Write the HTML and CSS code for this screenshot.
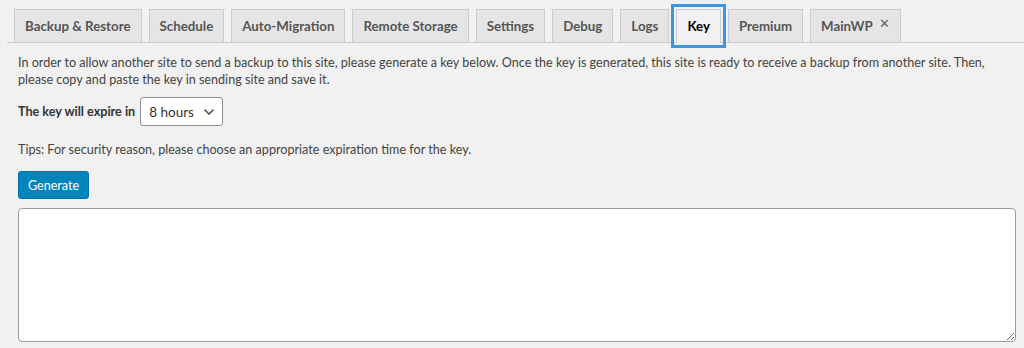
FILE: index.html
```html
<!DOCTYPE html>
<html lang="en">
<head>
    <meta charset="UTF-8">
    <title>Key</title>
    <link rel="stylesheet" href="styles.css">
</head>
<body>

<!-- Tab menu -->
<div class="nav-tab-wrapper">
    <a href="#" class="nav-tab">Backup &amp; Restore</a>
    <a href="#" class="nav-tab">Schedule</a>
    <a href="#" class="nav-tab">Auto-Migration</a>
    <a href="#" class="nav-tab">Remote Storage</a>
    <a href="#" class="nav-tab">Settings</a>
    <a href="#" class="nav-tab">Debug</a>
    <a href="#" class="nav-tab">Logs</a>
    <a href="#" class="nav-tab nav-tab-active">Key</a>
    <a href="#" class="nav-tab">Premium</a>
    <a href="#" class="nav-tab">MainWP <span class="close">&#x2715;</span></a>
</div>

<div class="content">
    <p>In order to allow another site to send a backup to this site, please generate a key below. Once the key is generated, this site is ready to receive a backup from another site. Then, please copy and paste the key in sending site and save it.</p>

    <div class="expire-row">
        <strong>The key will expire in</strong>
        <div class="select">
            <span>8 hours</span>
            <svg width="12" height="8" viewBox="0 0 12 8"><path d="M1.5 1.5 L6 6 L10.5 1.5" fill="none" stroke="#555" stroke-width="1.6"/></svg>
        </div>
    </div>

    <p class="tips">Tips: For security reason, please choose an appropriate expiration time for the key.</p>

    <button class="button-primary">Generate</button>

    <textarea class="key-box"></textarea>
</div>

</body>
</html>
```

FILE: styles.css
```css
/* Reset */
* {
    margin: 0;
    padding: 0;
    box-sizing: border-box;
}

body {
    font-family: Lato, Arial, sans-serif;
    background-color: #f1f1f1;
    color: #444;
    font-size: 12.6px;
}

/* Tabs */
.nav-tab-wrapper {
    display: flex;
    margin: 9px 0 0 7px;
    border-bottom: 1px solid #ccc;
    width: 1017px;
}

.nav-tab {
    display: flex;
    align-items: center;
    margin-left: 7px;
    margin-bottom: -1px;
    height: 34px;
    padding: 0 10px;
    border: 1px solid #ccc;
    background-color: #e5e5e5;
    color: #555;
    font-size: 13.3px;
    font-weight: 700;
    text-decoration: none;
}

.nav-tab-active {
    position: relative;
    background-color: #f1f1f1;
    border-bottom-color: #f1f1f1;
    color: #000;
    outline: 3px solid #3c96e6;
    outline-offset: 2px;
}

.close {
    font-weight: 400;
    font-size: 13px;
    margin-left: 6px;
    color: #666;
    position: relative;
    top: -3px;
}

/* Content */
.content {
    padding: 11px 8px 0 18px;
}

.content p {
    line-height: 17px;
}

.expire-row {
    display: flex;
    align-items: center;
    margin-top: 9px;
}

.expire-row strong {
    font-weight: 700;
    color: #333;
    margin-right: 5px;
}

.select {
    display: flex;
    align-items: center;
    justify-content: space-between;
    width: 83px;
    height: 29px;
    padding: 0 7px 0 8px;
    background-color: #fff;
    border: 1px solid #8c8f94;
    border-radius: 3px;
    color: #333;
    font-size: 13.5px;
}

.tips {
    margin-top: 15px;
}

.button-primary {
    display: block;
    margin-top: 13px;
    width: 71px;
    height: 28px;
    background-color: #0085ba;
    border: 1px solid #0073aa;
    border-radius: 3px;
    color: #fff;
    font-family: inherit;
    font-size: 12.6px;
}

.key-box {
    display: block;
    margin-top: 9px;
    width: 998px;
    height: 134px;
    background-color: #fff;
    border: 1px solid #9a9da2;
    border-radius: 4px;
}
```
